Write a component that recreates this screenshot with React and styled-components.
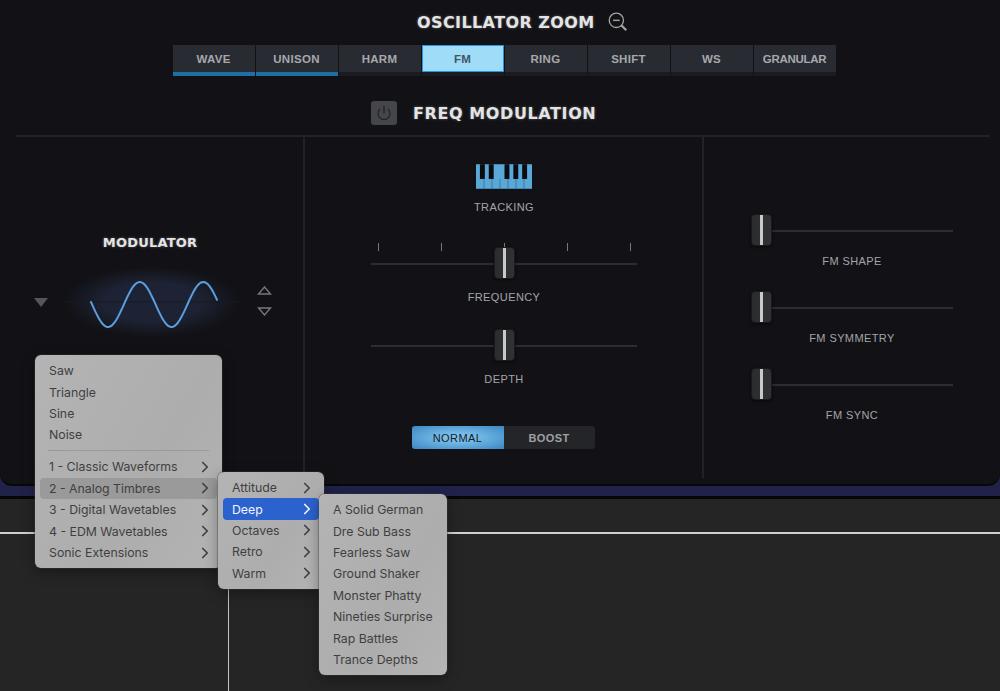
import React from 'react';
import styled, { createGlobalStyle } from 'styled-components';
import { Power, ChevronRight } from 'lucide-react';

const GlobalStyle = createGlobalStyle`
  html, body {
    margin: 0;
    padding: 0;
    background: #252525;
  }
  * {
    box-sizing: border-box;
  }
`;

const Page = styled.div`
  position: relative;
  width: 1000px;
  height: 691px;
  overflow: hidden;
  display: flex;
  flex-direction: column;
  background: #252525;
  font-family: "Liberation Sans", Arial, sans-serif;
`;

const Frame = styled.div`
  height: 499px;
  background: #21224a;
  border-bottom: 3px solid #060608;
`;

const Panel = styled.div`
  height: 486px;
  background: #121216;
  border-bottom: 2px solid #08080b;
  border-radius: 0 0 12px 12px;
  display: flex;
  flex-direction: column;
`;

const TitleRow = styled.div`
  height: 45px;
  display: flex;
  align-items: center;
  gap: 13px;
  padding-left: 417px;
`;

const Heading = styled.h1`
  margin: 0;
  font-family: "DejaVu Sans", sans-serif;
  font-weight: 700;
  font-size: ${(p) => p.$size || 16}px;
  letter-spacing: ${(p) => p.$spacing || 0}px;
  color: #e4e4e4;
  text-shadow: 0 0 3px rgba(255, 255, 255, 0.3);
  white-space: nowrap;
`;

const ZoomBtn = styled.svg`
  width: 22px;
  height: 22px;
  margin-top: -1px;
`;

const Tabs = styled.div`
  margin-left: 173px;
  width: 663px;
  display: grid;
  grid-template-columns: repeat(8, 82px);
  gap: 1px;
`;

const Tab = styled.div`
  height: 31px;
  background: ${(p) => (p.$on ? '#1f6ea6' : '#1b1c21')};
`;

const TabFace = styled.div`
  height: 27px;
  padding-right: 1px;
  display: flex;
  align-items: center;
  justify-content: center;
  font-size: 11.5px;
  font-weight: 700;
  letter-spacing: ${(p) => (p.$tight ? -0.3 : 0.3)}px;
  color: ${(p) => (p.$current ? '#3d5666' : '#a6a8ac')};
  background: ${(p) => (p.$current ? '#9fdcf7' : '#292b32')};
  border: ${(p) => (p.$current ? '1px solid #2b93e0' : '0 solid transparent')};
`;

const SectionHead = styled.div`
  margin-top: 25px;
  height: 24px;
  display: flex;
  align-items: center;
  gap: 16px;
  padding-left: 371px;
`;

const PowerBtn = styled.div`
  width: 26px;
  height: 24px;
  border-radius: 3px;
  background: #45464a;
  color: #1f2023;
  display: flex;
  align-items: center;
  justify-content: center;
`;

const Body = styled.div`
  margin: 10px 10px 0 16px;
  border-top: 2px solid #222327;
  display: grid;
  grid-template-columns: 287px 401px 1fr;
  height: 343px;
`;

const LeftCol = styled.div`
  padding: 98px 19px 0 0;
  display: flex;
  flex-direction: column;
  align-items: center;
`;

const MidCol = styled.div`
  border-left: 2px solid #222327;
  border-right: 2px solid #222327;
  padding: 27px 0 0 1px;
  display: flex;
  flex-direction: column;
  align-items: center;
`;

const RightCol = styled.div`
  padding: 77px 37px 0 47px;
  display: flex;
  flex-direction: column;
`;

const WaveRow = styled.div`
  align-self: flex-start;
  width: 287px;
  margin-top: 17px;
  padding-left: 18px;
  display: flex;
  align-items: center;
`;

const PrevArrow = styled.div`
  width: 0;
  height: 0;
  border-left: 7px solid transparent;
  border-right: 7px solid transparent;
  border-top: 9px solid #55565a;
  margin-right: 14px;
  margin-top: 1px;
`;

const WaveBox = styled.div`
  width: 180px;
  height: 70px;
  background: radial-gradient(ellipse 48% 50% at 50% 50%, #1d2334 55%, rgba(18, 18, 22, 0) 100%);
`;

const Stepper = styled.div`
  margin-left: 15px;
  margin-top: -2px;
  display: flex;
  flex-direction: column;
  gap: 12px;
`;

const TrackingLabel = styled.div`
  font-size: 11px;
  letter-spacing: 0.4px;
  color: #a4a4a6;
  text-align: center;
  margin-top: ${(p) => p.$top || 0}px;
  height: 13px;
  line-height: 13px;
  white-space: nowrap;
`;

const Keys = styled.svg`
  width: 56px;
  height: 25px;
  display: block;
`;

const Ticks = styled.div`
  width: 253px;
  margin-top: 29px;
  display: flex;
  justify-content: space-between;
`;

const Tick = styled.div`
  width: 1px;
  height: 8px;
  background: #77787b;
`;

const SliderWrap = styled.div`
  position: relative;
  width: ${(p) => p.$width}px;
  height: 32px;
  margin-top: ${(p) => p.$top || 0}px;
  display: flex;
  align-items: center;
`;

const Track = styled.div`
  width: 100%;
  height: 2px;
  margin-top: 1px;
  background: #2c2d31;
`;

const Thumb = styled.div`
  position: absolute;
  top: 0;
  left: ${(p) => p.$left}px;
  width: 21px;
  height: 32px;
  border-radius: 4px;
  background: linear-gradient(90deg, #2b2c2e, #313235);
  border: 1px solid #1a1a1c;
  box-shadow: 0 1px 3px rgba(0, 0, 0, 0.6);
  display: flex;
  justify-content: center;

  &::after {
    content: '';
    width: 3px;
    height: 100%;
    background: #c9c9c9;
  }
`;

const Toggle = styled.div`
  margin: 40px 2px 0 0;
  width: 183px;
  height: 23px;
  border-radius: 3px;
  background: #242529;
  display: grid;
  grid-template-columns: 92px 1fr;
  overflow: hidden;
`;

const ToggleBtn = styled.div`
  display: flex;
  align-items: center;
  justify-content: center;
  font-size: 11px;
  font-weight: ${(p) => (p.$on ? 400 : 700)};
  letter-spacing: 0.4px;
  color: ${(p) => (p.$on ? '#12202c' : '#a0a0a2')};
  background: ${(p) => (p.$on ? 'radial-gradient(ellipse at center, #7cc0ea 20%, #3a87c4 100%)' : 'transparent')};
`;

const RightSlider = styled.div`
  height: 77px;
  display: flex;
  flex-direction: column;
`;

const Lower = styled.div`
  flex: 1;
  padding-top: 33px;
`;

const Lane = styled.div`
  height: 2px;
  background: #d0d0d0;
`;

const Playhead = styled.div`
  position: absolute;
  left: 228px;
  top: 533px;
  bottom: 0;
  width: 1px;
  background: #c4c4c4;
`;

const Menu = styled.div`
  position: absolute;
  left: ${(p) => p.$left}px;
  top: ${(p) => p.$top}px;
  width: ${(p) => p.$width}px;
  padding: 5px;
  border-radius: 6px;
  background: linear-gradient(120deg, #b4b4b4, #adadad 60%, #b4b4b4);
  box-shadow: 0 0 0 1px rgba(60, 60, 60, 0.35), 0 4px 14px rgba(0, 0, 0, 0.35);
  font-family: Inter, "Liberation Sans", sans-serif;
`;

const Row = styled.div`
  height: 21.4px;
  padding: 0 3.5px 0 9px;
  border-radius: 4px;
  display: flex;
  align-items: center;
  justify-content: space-between;
  font-size: 12.3px;
  white-space: nowrap;
  color: ${(p) => (p.$selected ? '#f2f5fb' : '#3f3f3f')};
  background: ${(p) => (p.$selected ? '#2c62cd' : p.$hovered ? '#9a9a9a' : 'transparent')};
`;

const Sep = styled.div`
  height: 10.7px;
  margin: 0 8px;
  display: flex;
  align-items: center;

  &::after {
    content: '';
    flex: 1;
    height: 1px;
    margin-top: -1px;
    background: #9a9a9a;
  }
`;

const ZoomOutIcon = () => (
  <ZoomBtn viewBox="0 0 20 20" fill="none" stroke="#a4a4a4">
    <circle cx="8.5" cy="8.5" r="6.5" strokeWidth="1.2" />
    <path d="M5.5 8.5h6" strokeWidth="1.3" />
    <path d="M13 13l4.5 4.5" strokeWidth="2" />
  </ZoomBtn>
);

const Piano = () => (
  <Keys viewBox="0 0 57 25">
    <rect width="57" height="25" fill="#5aa8d8" />
    {[1, 2, 3, 4, 5, 6].map((i) => (
      <rect key={i} x={i * 8.14 - 0.3} y="15" width="0.6" height="10" fill="#2a5a78" />
    ))}
    {[4, 13, 29, 38, 47].map((x) => (
      <rect key={x} x={x} y="0" width="5" height="15" fill="#0c0c0e" />
    ))}
  </Keys>
);

// sine drawn from the same numbers as the reference wave, x offset is the svg's left edge
const sinePath = () => {
  const pts = [];
  for (let x = 91; x <= 218; x += 1.5) {
    const y = 304.5 + 22.5 * Math.cos((2 * Math.PI * (x - 108)) / 63.5);
    pts.push(`${(x - 62).toFixed(1)} ${(y - 267).toFixed(1)}`);
  }
  return 'M' + pts.join(' L');
};

const Wave = () => (
  <WaveBox>
    <svg width="180" height="70" viewBox="0 0 180 70" fill="none">
      <path d="M0 35h180" stroke="#191b23" strokeWidth="1" />
      <path d={sinePath()} stroke="#5b9fe0" strokeWidth="2" strokeLinecap="round" strokeLinejoin="round" />
    </svg>
  </WaveBox>
);

const StepIcon = ({ down }) => (
  <svg width="15" height="9" viewBox="0 0 15 9" fill="none" stroke="#77787b" strokeWidth="1.4">
    <path d={down ? 'M1.5 1h12L7.5 8z' : 'M1.5 8h12L7.5 1z'} />
  </svg>
);

const tabs = [
  { name: 'WAVE', on: true },
  { name: 'UNISON', on: true },
  { name: 'HARM' },
  { name: 'FM', current: true },
  { name: 'RING' },
  { name: 'SHIFT' },
  { name: 'WS' },
  { name: 'GRANULAR', tight: true },
];

const MenuRow = ({ label, sub, selected, hovered }) => (
  <Row $selected={selected} $hovered={hovered}>
    {label}
    {sub && <ChevronRight size={18} strokeWidth={2.2} />}
  </Row>
);

const App = () => {
  return (
    <Page>
      <GlobalStyle />
      <Frame>
        <Panel>
          <TitleRow>
            <Heading $spacing={0.4}>OSCILLATOR ZOOM</Heading>
            <ZoomOutIcon />
          </TitleRow>
          <Tabs>
            {tabs.map((t) => (
              <Tab key={t.name} $on={t.on}>
                <TabFace $current={t.current} $tight={t.tight}>{t.name}</TabFace>
              </Tab>
            ))}
          </Tabs>
          <SectionHead>
            <PowerBtn><Power size={16} strokeWidth={1.8} /></PowerBtn>
            <Heading $spacing={0.6}>FREQ MODULATION</Heading>
          </SectionHead>
          <Body>
            <LeftCol>
              <Heading $size={13} $spacing={0.2}>MODULATOR</Heading>
              <WaveRow>
                <PrevArrow />
                <Wave />
                <Stepper>
                  <StepIcon />
                  <StepIcon down />
                </Stepper>
              </WaveRow>
            </LeftCol>
            <MidCol>
              <Piano />
              <TrackingLabel $top={12}>TRACKING</TrackingLabel>
              <Ticks>
                {[0, 1, 2, 3, 4].map((i) => <Tick key={i} />)}
              </Ticks>
              <SliderWrap $width={266} $top={-4}>
                <Track />
                <Thumb $left={123} />
              </SliderWrap>
              <TrackingLabel $top={12}>FREQUENCY</TrackingLabel>
              <SliderWrap $width={266} $top={25}>
                <Track />
                <Thumb $left={123} />
              </SliderWrap>
              <TrackingLabel $top={12}>DEPTH</TrackingLabel>
              <Toggle>
                <ToggleBtn $on>NORMAL</ToggleBtn>
                <ToggleBtn>BOOST</ToggleBtn>
              </Toggle>
            </MidCol>
            <RightCol>
              {['FM SHAPE', 'FM SYMMETRY', 'FM SYNC'].map((name) => (
                <RightSlider key={name}>
                  <SliderWrap $width={202}>
                    <Track />
                    <Thumb $left={0} />
                  </SliderWrap>
                  <TrackingLabel $top={9}>{name}</TrackingLabel>
                </RightSlider>
              ))}
            </RightCol>
          </Body>
        </Panel>
      </Frame>
      <Lower>
        <Lane />
      </Lower>
      <Playhead />
      <Menu $left={35} $top={355} $width={187}>
        <MenuRow label="Saw" />
        <MenuRow label="Triangle" />
        <MenuRow label="Sine" />
        <MenuRow label="Noise" />
        <Sep />
        <MenuRow label="1 - Classic Waveforms" sub />
        <MenuRow label="2 - Analog Timbres" sub hovered />
        <MenuRow label="3 - Digital Wavetables" sub />
        <MenuRow label="4 - EDM Wavetables" sub />
        <MenuRow label="Sonic Extensions" sub />
      </Menu>
      <Menu $left={218} $top={472} $width={106}>
        <MenuRow label="Attitude" sub />
        <MenuRow label="Deep" sub selected />
        <MenuRow label="Octaves" sub />
        <MenuRow label="Retro" sub />
        <MenuRow label="Warm" sub />
      </Menu>
      <Menu $left={319} $top={494} $width={128}>
        <MenuRow label="A Solid German" />
        <MenuRow label="Dre Sub Bass" />
        <MenuRow label="Fearless Saw" />
        <MenuRow label="Ground Shaker" />
        <MenuRow label="Monster Phatty" />
        <MenuRow label="Nineties Surprise" />
        <MenuRow label="Rap Battles" />
        <MenuRow label="Trance Depths" />
      </Menu>
    </Page>
  );
};

export default App;
